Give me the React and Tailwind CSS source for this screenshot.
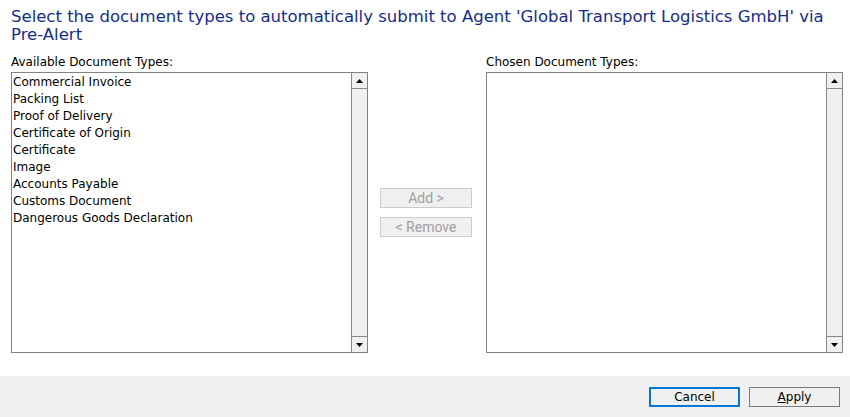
import React from "react";

const items = [
  "Commercial Invoice",
  "Packing List",
  "Proof of Delivery",
  "Certificate of Origin",
  "Certificate",
  "Image",
  "Accounts Payable",
  "Customs Document",
  "Dangerous Goods Declaration",
];

function Arrow({ up }) {
  return (
    <svg width="7" height="4" viewBox="0 0 7 4">
      {up ? <polygon points="3.5,0 7,4 0,4" fill="#000" /> : <polygon points="0,0 7,0 3.5,4" fill="#000" />}
    </svg>
  );
}

function ListBox({ entries }) {
  return (
    <div className="flex h-[281px] w-[357px] shrink-0 border border-[#828282] bg-white">
      <div className="flex-1 pl-[1px] pt-[1px] text-[12px] leading-[17px] text-black">
        {entries.map((e) => (
          <div key={e} className="h-[17px] whitespace-nowrap">{e}</div>
        ))}
      </div>
      <div className="flex w-[16px] flex-col border-l border-[#888888] bg-[#f0f0f0]">
        <div className="flex h-[16px] items-center justify-center border-b border-[#888888]">
          <Arrow up />
        </div>
        <div className="flex-1" />
        <div className="flex h-[16px] items-center justify-center border-t border-[#888888]">
          <Arrow />
        </div>
      </div>
    </div>
  );
}

export default function App() {
  return (
    <div
      className="flex h-[417px] w-[850px] flex-col bg-white"
      style={{ fontFamily: '"DejaVu Sans", Verdana, sans-serif' }}
    >
      <div className="whitespace-nowrap px-[11px] pt-[8px] text-[16.5px] leading-[18px] text-[#142d8c]">
        Select the document types to automatically submit to Agent 'Global Transport Logistics GmbH' via
        <br />
        Pre-Alert
      </div>
      <div className="mt-[11px] flex pl-[11px]">
        <div className="flex shrink-0 flex-col">
          <div className="mb-[3px] h-[14px] text-[12px] leading-[14px] text-black">Available Document Types:</div>
          <ListBox entries={items} />
        </div>
        <div className="mt-[17px] flex h-[281px] w-[118px] shrink-0 flex-col justify-center gap-[9px] pl-[12px]">
          <div
            className="flex h-[20px] w-[92px] items-center justify-center border border-[#cccccc] bg-[#f0f0f0] text-[14px] text-[#a0a0a0]"
            style={{ fontFamily: 'Roboto, "Liberation Sans", sans-serif' }}
          >
            Add &gt;
          </div>
          <div
            className="flex h-[20px] w-[92px] items-center justify-center border border-[#cccccc] bg-[#f0f0f0] text-[14px] text-[#a0a0a0]"
            style={{ fontFamily: 'Roboto, "Liberation Sans", sans-serif' }}
          >
            &lt; Remove
          </div>
        </div>
        <div className="flex shrink-0 flex-col">
          <div className="mb-[3px] h-[14px] text-[12px] leading-[14px] text-black">Chosen Document Types:</div>
          <ListBox entries={[]} />
        </div>
      </div>
      <div className="mt-auto flex h-[41px] items-center justify-end gap-[9px] bg-[#f0f0f0] pr-[10px]">
        <div className="flex h-[20px] w-[91px] items-center justify-center border-2 border-[#0078d7] bg-[#f0f0f0] text-[12px] text-black">
          Cancel
        </div>
        <div className="flex h-[20px] w-[91px] items-center justify-center border border-[#7a7a7a] bg-[#f0f0f0] text-[12px] text-black">
          <span><span className="underline">A</span>pply</span>
        </div>
      </div>
    </div>
  );
}
